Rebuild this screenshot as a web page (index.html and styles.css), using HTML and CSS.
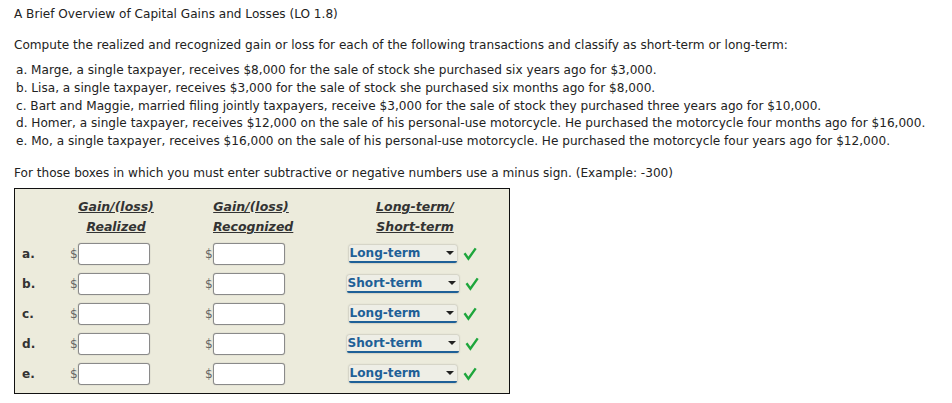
FILE: index.html
```html
<!DOCTYPE html>
<html>
<head>
<meta charset="utf-8">
<link rel="stylesheet" href="styles.css">
</head>
<body>
<div class="page">
  <p class="title">A Brief Overview of Capital Gains and Losses (LO 1.8)</p>
  <p class="intro">Compute the realized and recognized gain or loss for each of the following transactions and classify as short-term or long-term:</p>
  <ol class="items">
    <li>a. Marge, a single taxpayer, receives $8,000 for the sale of stock she purchased six years ago for $3,000.</li>
    <li>b. Lisa, a single taxpayer, receives $3,000 for the sale of stock she purchased six months ago for $8,000.</li>
    <li>c. Bart and Maggie, married filing jointly taxpayers, receive $3,000 for the sale of stock they purchased three years ago for $10,000.</li>
    <li>d. Homer, a single taxpayer, receives $12,000 on the sale of his personal-use motorcycle. He purchased the motorcycle four months ago for $16,000.</li>
    <li>e. Mo, a single taxpayer, receives $16,000 on the sale of his personal-use motorcycle. He purchased the motorcycle four years ago for $12,000.</li>
  </ol>
  <p class="note">For those boxes in which you must enter subtractive or negative numbers use a minus sign. (Example: -300)</p>

  <div class="box">
    <div class="grid">
      <div class="hd"></div>
      <div class="hd money-hd"><span>Gain/(loss)</span><span>Realized</span></div>
      <div class="hd money-hd"><span>Gain/(loss)</span><span>Recognized</span></div>
      <div class="hd term-hd"><span>Long-term/</span><span>Short-term</span></div>

      <div class="lbl">a.</div>
      <div class="money"><span class="dollar">$</span><span class="inp"></span></div>
      <div class="money"><span class="dollar">$</span><span class="inp"></span></div>
      <div class="term"><span class="sel">Long-term<i class="arr"></i></span><svg class="chk" viewBox="0 0 14 14"><path d="M2.2 7.2 L5.4 11.6 L12 2.4"/></svg></div>

      <div class="lbl">b.</div>
      <div class="money"><span class="dollar">$</span><span class="inp"></span></div>
      <div class="money"><span class="dollar">$</span><span class="inp"></span></div>
      <div class="term"><span class="sel">Short-term<i class="arr"></i></span><svg class="chk" viewBox="0 0 14 14"><path d="M2.2 7.2 L5.4 11.6 L12 2.4"/></svg></div>

      <div class="lbl">c.</div>
      <div class="money"><span class="dollar">$</span><span class="inp"></span></div>
      <div class="money"><span class="dollar">$</span><span class="inp"></span></div>
      <div class="term"><span class="sel">Long-term<i class="arr"></i></span><svg class="chk" viewBox="0 0 14 14"><path d="M2.2 7.2 L5.4 11.6 L12 2.4"/></svg></div>

      <div class="lbl">d.</div>
      <div class="money"><span class="dollar">$</span><span class="inp"></span></div>
      <div class="money"><span class="dollar">$</span><span class="inp"></span></div>
      <div class="term"><span class="sel">Short-term<i class="arr"></i></span><svg class="chk" viewBox="0 0 14 14"><path d="M2.2 7.2 L5.4 11.6 L12 2.4"/></svg></div>

      <div class="lbl">e.</div>
      <div class="money"><span class="dollar">$</span><span class="inp"></span></div>
      <div class="money"><span class="dollar">$</span><span class="inp"></span></div>
      <div class="term"><span class="sel">Long-term<i class="arr"></i></span><svg class="chk" viewBox="0 0 14 14"><path d="M2.2 7.2 L5.4 11.6 L12 2.4"/></svg></div>
    </div>
  </div>
</div>
</body>
</html>
```

FILE: styles.css
```css
html, body {
  margin: 0;
  padding: 0;
  background: #ffffff;
}
body {
  font-family: Verdana, "DejaVu Sans", sans-serif;
  font-size: 12.1px;
  color: #222222;
}
.page {
  padding: 5px 14px 0 14px;
}
p { margin: 0; }
.title {
  line-height: 18px;
}
.intro {
  margin-top: 13px;
  line-height: 18px;
}
.items {
  list-style: none;
  margin: 8px 0 0 0;
  padding: 0 0 0 2px;
}
.items li {
  line-height: 17.8px;
  white-space: nowrap;
}
.note {
  margin-top: 13px;
  line-height: 18px;
}
.box {
  margin-top: 6px;
  width: 494px;
  border: 1px solid #111111;
  background: #ecebdc;
  padding: 8px 0 4px 0;
}
.grid {
  display: grid;
  grid-template-columns: 55px 135px 135px 146px;
  grid-template-rows: 42px repeat(5, 30px);
  align-items: center;
}
.grid .hd {
  align-self: start;
}
.hd span {
  display: block;
  line-height: 20px;
  font-size: 12.5px;
  font-weight: bold;
  font-style: italic;
  text-decoration: underline;
  color: #333333;
  text-align: center;
}
.money-hd {
  padding-left: 8px;
  width: 76px;
}
.term-hd {
  padding-left: 4px;
}
.lbl {
  padding-left: 7px;
  font-weight: bold;
  color: #333333;
}
.money {
  display: flex;
  align-items: center;
}
.dollar {
  width: 8px;
  color: #666666;
}
.inp {
  display: block;
  width: 70px;
  height: 20px;
  background: #ffffff;
  border: 1px solid #8a8a8a;
  border-radius: 3px;
  box-shadow: 0 0 1px rgba(0,0,0,0.35);
}
.term {
  display: flex;
  align-items: center;
  justify-content: center;
  gap: 6px;
}
.sel {
  display: flex;
  align-items: center;
  justify-content: space-between;
  height: 16px;
  padding: 0 3px 0 1px;
  background: #eeeee6;
  border-radius: 2px;
  box-shadow: 0 0 2px rgba(0,0,0,0.35);
  border-bottom: 2px solid #1e6097;
  color: #1e6097;
  font-weight: bold;
  line-height: 16px;
}
.arr {
  display: block;
  width: 0;
  height: 0;
  border-left: 4px solid transparent;
  border-right: 4px solid transparent;
  border-top: 4px solid #222222;
  margin-left: 26px;
}
.chk {
  width: 14px;
  height: 14px;
  fill: none;
  stroke: #1ea63c;
  stroke-width: 2.4;
  stroke-linecap: square;
  stroke-linejoin: miter;
}
```
